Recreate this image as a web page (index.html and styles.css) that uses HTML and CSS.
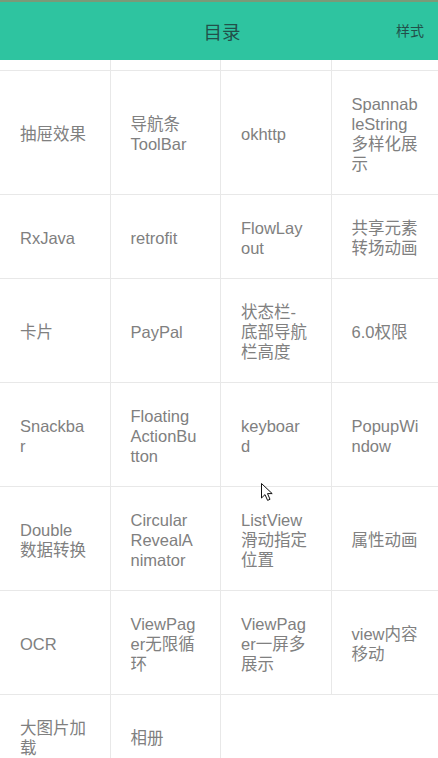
FILE: index.html
```html
<!DOCTYPE html>
<html lang="zh">
<head>
<meta charset="utf-8">
<title>目录</title>
<link rel="stylesheet" href="styles.css">
</head>
<body>
<div class="app">
  <header class="toolbar">
    <div class="title">目录</div>
    <div class="action">样式</div>
  </header>
  <main class="grid">
    <div class="cell stub"></div><div class="cell stub"></div><div class="cell stub"></div><div class="cell stub"></div>
    <div class="cell"><div class="label">抽屉效果</div></div>
    <div class="cell"><div class="label">导航条ToolBar</div></div>
    <div class="cell"><div class="label">okhttp</div></div>
    <div class="cell"><div class="label">SpannableString多样化展示</div></div>
    <div class="cell"><div class="label">RxJava</div></div>
    <div class="cell"><div class="label">retrofit</div></div>
    <div class="cell"><div class="label">FlowLayout</div></div>
    <div class="cell"><div class="label">共享元素转场动画</div></div>
    <div class="cell"><div class="label">卡片</div></div>
    <div class="cell"><div class="label">PayPal</div></div>
    <div class="cell"><div class="label">状态栏-底部导航栏高度</div></div>
    <div class="cell"><div class="label">6.0权限</div></div>
    <div class="cell"><div class="label">Snackbar</div></div>
    <div class="cell"><div class="label">FloatingActionButton</div></div>
    <div class="cell"><div class="label">keyboard</div></div>
    <div class="cell"><div class="label">PopupWindow</div></div>
    <div class="cell"><div class="label">Double数据转换</div></div>
    <div class="cell"><div class="label">CircularRevealAnimator</div></div>
    <div class="cell"><div class="label">ListView滑动指定位置</div></div>
    <div class="cell"><div class="label">属性动画</div></div>
    <div class="cell"><div class="label">OCR</div></div>
    <div class="cell"><div class="label">ViewPager无限循环</div></div>
    <div class="cell"><div class="label">ViewPager一屏多展示</div></div>
    <div class="cell"><div class="label">view内容移动</div></div>
    <div class="cell"><div class="label">大图片加载</div></div>
    <div class="cell"><div class="label">相册</div></div>
  </main>
  <svg class="cursor" width="14" height="20" viewBox="0 0 14 20" aria-hidden="true">
    <path d="M1.5 1.5 L1.5 16 L5 12.6 L7.6 18.4 L10 17.3 L7.5 11.6 L12.2 11.6 Z" fill="#fff" stroke="#111" stroke-width="1" stroke-linejoin="round"/>
  </svg>
</div>
</body>
</html>
```

FILE: styles.css
```css
html, body {
  margin: 0;
  padding: 0;
  background: #ffffff;
}

.app {
  position: relative;
  width: 438px;
  height: 758px;
  overflow: hidden;
  font-family: "Liberation Sans", "Noto Sans CJK SC", sans-serif;
}

.toolbar {
  box-sizing: border-box;
  height: 60px;
  border-top: 2px solid #7b9a78;
  background: #2ec4a0;
  display: flex;
  align-items: center;
  justify-content: center;
  position: relative;
  font-family: "Noto Sans CJK SC", sans-serif;
  color: #22504a;
}

.title {
  font-size: 18.5px;
  line-height: 24px;
  margin-left: 6px;
}

.action {
  position: absolute;
  right: 14px;
  top: 18px;
  font-size: 14px;
  line-height: 20px;
}

.grid {
  display: grid;
  grid-template-columns: repeat(4, 110.5px);
  width: 442px;
}

.cell {
  box-sizing: border-box;
  border-right: 1px solid #e8e8e8;
  border-bottom: 1px solid #e8e8e8;
  padding: 23px 22px 20px 20px;
  display: flex;
  align-items: center;
  min-width: 0;
}

.cell.stub {
  height: 11px;
  padding: 0;
}

.label {
  width: 100%;
  font-size: 16.5px;
  line-height: 20px;
  color: #808080;
  overflow-wrap: anywhere;
}

.cursor {
  position: absolute;
  left: 260px;
  top: 482px;
}
```
